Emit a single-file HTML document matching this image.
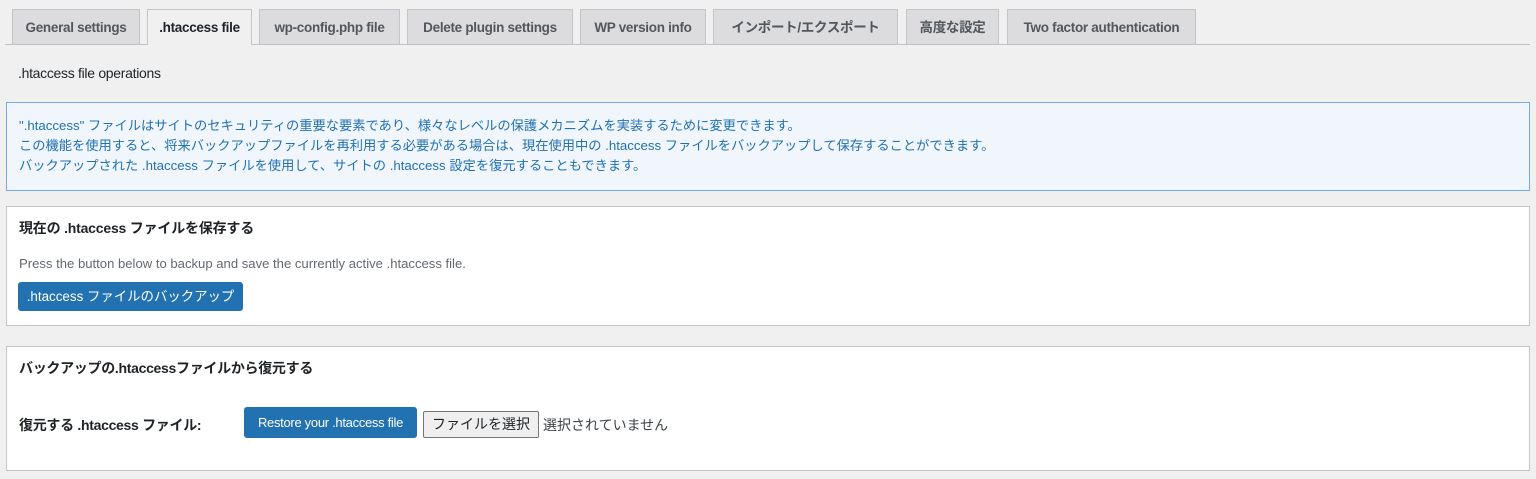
<!DOCTYPE html>
<html><head><meta charset="utf-8"><style>
body{margin:0;width:1536px;height:479px;background:#f0f0f1;font-family:"Liberation Sans","Noto Sans CJK JP",sans-serif;color:#1d2327;position:relative;overflow:hidden;font-size:13px}
.a{position:absolute;white-space:nowrap}
.tab{position:absolute;top:9px;height:35px;box-sizing:border-box;background:#dcdcde;border:1px solid #c3c4c7;border-bottom:none;font-weight:600;font-size:13.5px;color:#50575e;line-height:35px;text-align:center;letter-spacing:-0.3px}
.tab.on{background:#f0f0f1;color:#1d2327;height:36px}
.line{position:absolute;left:5px;width:1525px;top:44px;height:1px;background:#c3c4c7}
.box{position:absolute;left:6px;width:1524px;box-sizing:border-box;background:#fff;border:1px solid #c3c4c7}
.btn{position:absolute;background:#2271b1;color:#fff;border-radius:3px;text-align:center;font-size:13px;letter-spacing:-0.3px}
</style></head><body>
<div class="line"></div>
<div class="tab" style="left:12px;width:128px">General settings</div>
<div class="tab on" style="left:147px;width:105px">.htaccess file</div>
<div class="tab" style="left:259px;width:141px">wp-config.php file</div>
<div class="tab" style="left:407px;width:166px">Delete plugin settings</div>
<div class="tab" style="left:580px;width:126px">WP version info</div>
<div class="tab" style="left:713px;width:185px">インポート/エクスポート</div>
<div class="tab" style="left:906px;width:93px">高度な設定</div>
<div class="tab" style="left:1007px;width:189px">Two factor authentication</div>
<div class="a" style="left:18px;top:65px;font-size:14px;font-weight:500;letter-spacing:-0.3px">.htaccess file operations</div>
<div class="box" style="top:102px;height:89px;background:#f0f6fc;border-color:#72aee6"></div>
<div class="a" style="left:19px;top:116px;color:#2271b1;line-height:20px;font-size:13.25px">".htaccess" ファイルはサイトのセキュリティの重要な要素であり、様々なレベルの保護メカニズムを実装するために変更できます。<br>この機能を使用すると、将来バックアップファイルを再利用する必要がある場合は、現在使用中の .htaccess ファイルをバックアップして保存することができます。<br>バックアップされた .htaccess ファイルを使用して、サイトの .htaccess 設定を復元することもできます。</div>
<div class="box" style="top:206px;height:120px"></div>
<div class="a" style="left:19px;top:218px;font-weight:700;font-size:14px;letter-spacing:-0.2px">現在の .htaccess ファイルを保存する</div>
<div class="a" style="left:19px;top:256px;color:#646970;font-size:13.1px;letter-spacing:0px">Press the button below to backup and save the currently active .htaccess file.</div>
<div class="btn" style="left:18px;top:282px;width:225px;height:29px;line-height:29px;font-size:13.4px;letter-spacing:0">.htaccess ファイルのバックアップ</div>
<div class="box" style="top:346px;height:125px"></div>
<div class="a" style="left:19px;top:358px;font-weight:700;font-size:14px;letter-spacing:-0.3px">バックアップの.htaccessファイルから復元する</div>
<div class="a" style="left:19px;top:415px;font-weight:700;font-size:14px;letter-spacing:-0.3px">復元する .htaccess ファイル:</div>
<div class="btn" style="left:244px;top:407px;width:173px;height:31px;line-height:31px">Restore your .htaccess file</div>
<div class="a" style="left:423px;top:411px;width:116px;height:27px;box-sizing:border-box;border:1px solid #767676;background:#efefef;border-radius:2px;text-align:center;line-height:25px;font-size:14px">ファイルを選択</div>
<div class="a" style="left:543px;top:415px;font-size:14px;color:#3c434a">選択されていません</div>
</body></html>
